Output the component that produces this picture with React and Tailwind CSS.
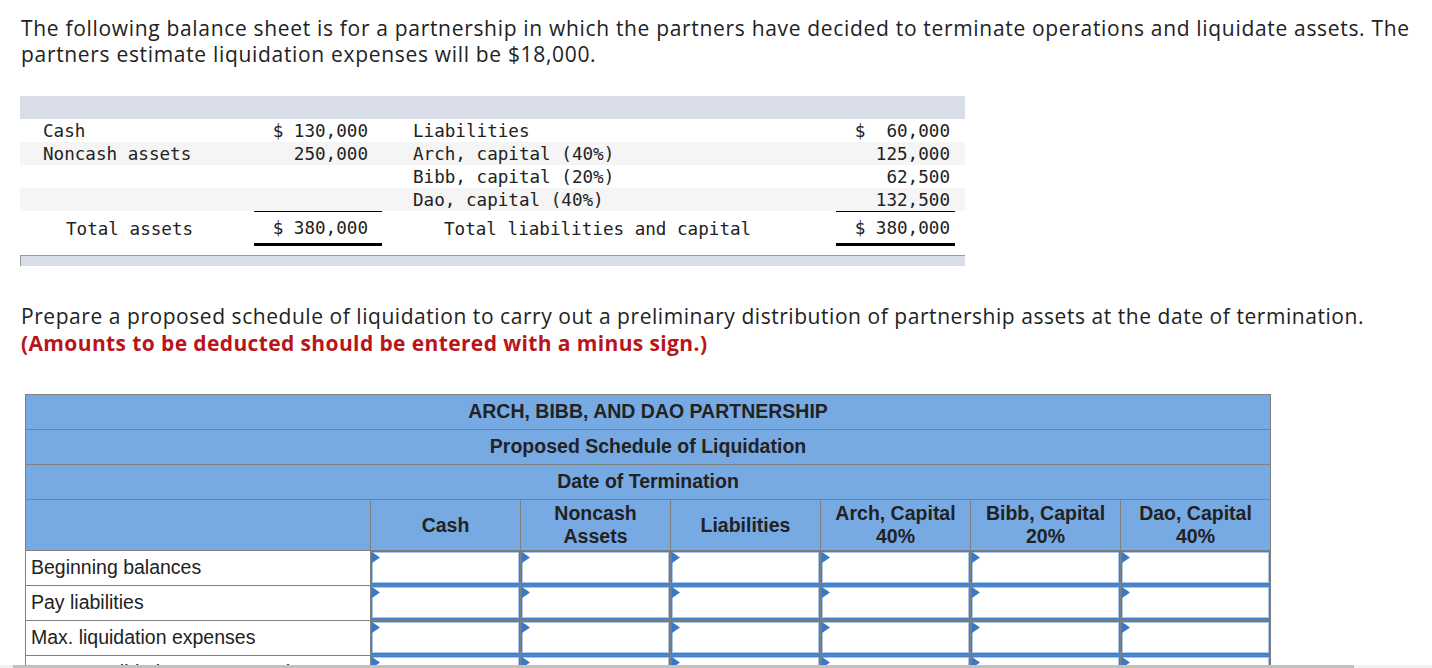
import React from 'react';

const leftRows = [
  ['Cash', '$ 130,000', 'Liabilities', '$  60,000', 'bg-white'],
  ['Noncash assets', '250,000', 'Arch, capital (40%)', '125,000', 'bg-[#f5f5f5]'],
  ['', '', 'Bibb, capital (20%)', '62,500', 'bg-white'],
  ['', '', 'Dao, capital (40%)', '132,500', 'bg-[#f5f5f5]'],
];

const columns = [
  ['Cash'],
  ['Noncash', 'Assets'],
  ['Liabilities'],
  ['Arch, Capital', '40%'],
  ['Bibb, Capital', '20%'],
  ['Dao, Capital', '40%'],
];

const steps = ['Beginning balances', 'Pay liabilities', 'Max. liquidation expenses', 'Max. possible loss on noncash assets'];

function BalanceSheet() {
  return (
    <div className="ml-[20px] mt-[29px] w-[945px] font-['DejaVu_Sans_Mono',monospace] text-[17.6px] text-[#222] whitespace-pre">
      <div className="h-[23px] bg-[#d9dde8]" />
      {leftRows.map(([a, b, c, d, bg], i) => (
        <div key={i} className={`grid grid-cols-[234px_128px_454px_119px_10px] h-[23px] leading-[25px] ${bg}`}>
          <div className="pl-[23px]">{a}</div>
          <div className="text-right pr-[14px]">{b}</div>
          <div className="pl-[31px]">{c}</div>
          <div className="text-right pr-[5px]">{d}</div>
          <div />
        </div>
      ))}
      <div className="grid grid-cols-[234px_128px_454px_119px_10px] h-[44px]">
        <div className="pl-[46px] leading-[36px]">Total assets</div>
        <div className="h-[35px] border-t border-b-[3px] border-b-double border-black text-right pr-[14px] leading-[33px]">$ 380,000</div>
        <div className="pl-[62px] leading-[36px]">Total liabilities and capital</div>
        <div className="h-[35px] border-t border-b-[3px] border-b-double border-black text-right pr-[5px] leading-[33px]">$ 380,000</div>
        <div />
      </div>
      <div className="h-[11px] bg-[#d9dde8] border-t border-l border-[#9a9a9a]" />
    </div>
  );
}

function InputCell() {
  return (
    <td className="border border-[#7f7f7f] p-0 h-[35px]">
      <div className="relative h-[34px] border border-b-2 border-[#4581c9] shadow-[inset_0_0_0_1px_#a8c7eb] bg-white">
        <svg className="absolute left-0 top-0" width="8" height="11" viewBox="0 0 8 11">
          <polygon points="0,0 8,5.5 0,11" fill="#3a78c5" />
        </svg>
      </div>
    </td>
  );
}

function Schedule() {
  const head = 'border border-[#7f7f7f] bg-[#77aae3] text-center font-bold text-[19.5px] text-[#222] h-[35px] p-0';
  return (
    <table className="ml-[25px] mt-[37px] w-[1246px] table-fixed border-collapse font-['Liberation_Sans',Arial,sans-serif]">
      <colgroup>
        <col className="w-[345px]" />
        {columns.map((_, i) => <col key={i} className="w-[150px]" />)}
      </colgroup>
      <tbody>
        <tr><td colSpan={7} className={`${head} leading-[32px] align-top`}>ARCH, BIBB, AND DAO PARTNERSHIP</td></tr>
        <tr><td colSpan={7} className={head}>Proposed Schedule of Liquidation</td></tr>
        <tr><td colSpan={7} className={head}>Date of Termination</td></tr>
        <tr>
          <td className={`${head} h-[51px]`} />
          {columns.map((c, i) => (
            <td key={i} className={`${head} h-[51px] leading-[23px]`}>
              {c.map((l) => <div key={l}>{l}</div>)}
            </td>
          ))}
        </tr>
        {steps.map((s) => (
          <tr key={s}>
            <td className="border border-[#7f7f7f] h-[35px] px-[5px] text-[19.5px] text-[#222] whitespace-nowrap">{s}</td>
            {columns.map((_, i) => <InputCell key={i} />)}
          </tr>
        ))}
      </tbody>
    </table>
  );
}

export default function App() {
  return (
    <div className="relative h-[668px] overflow-hidden bg-white">
      <div className="pt-[15px] px-[21px] font-['Open_Sans',sans-serif] text-[21px] leading-[26px] tracking-[0.68px] text-[#222]">
        The following balance sheet is for a partnership in which the partners have decided to terminate operations and liquidate assets. The partners estimate liquidation expenses will be $18,000.
      </div>
      <BalanceSheet />
      <div className="mt-[37px] px-[21px] text-[21px] leading-[27px] text-[#222]">
        <div className="font-['Open_Sans',sans-serif] tracking-[0.55px]">Prepare a proposed schedule of liquidation to carry out a preliminary distribution of partnership assets at the date of termination.</div>
        <div className="font-['Open_Sans',sans-serif] font-bold tracking-[0.38px] text-[#b8141c]">(Amounts to be deducted should be entered with a minus sign.)</div>
      </div>
      <Schedule />
      <div className="fixed bottom-0 left-0 right-0 h-[3px] bg-[#f0f0f0]">
        <div className="ml-[13px] w-[1341px] h-full bg-[#c1c1c1]" />
      </div>
    </div>
  );
}
